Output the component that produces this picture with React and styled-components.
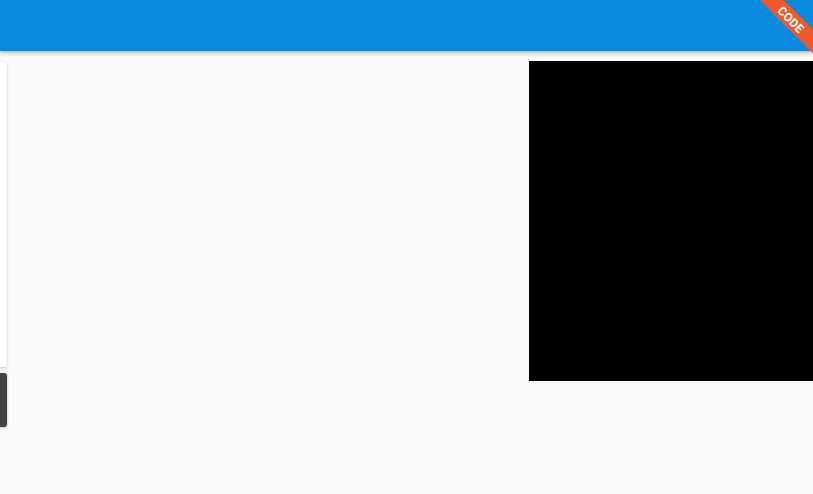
import React from "react";
import styled, { createGlobalStyle } from "styled-components";

const GlobalStyle = createGlobalStyle`
  * { margin: 0; padding: 0; box-sizing: border-box; }
  html, body { width: 100%; height: 100%; overflow: hidden; }
  body { background-color: #fafafa; font-family: Roboto, "Liberation Sans", sans-serif; }
`;

const Page = styled.div`
  position: relative;
  min-height: 100vh;
  overflow: hidden;
`;

const Header = styled.header`
  height: 51px;
  background-color: #0a89de;
  box-shadow: 0 2px 4px rgba(0, 0, 0, 0.28);
  position: relative;
  z-index: 1;
`;

// diagonal "CODE" corner ribbon
const Ribbon = styled.div`
  position: absolute;
  top: 11px;
  right: -28px;
  width: 100px;
  height: 17px;
  background-color: #ee5a2b;
  color: #fff;
  font-size: 12px;
  font-weight: 700;
  letter-spacing: 0.2px;
  display: flex;
  align-items: center;
  justify-content: center;
  transform: rotate(45deg);
  z-index: 2;
`;

const Body = styled.main`
  display: flex;
  justify-content: space-between;
  align-items: flex-start;
`;

const Side = styled.aside`
  width: 7px;
  display: flex;
  flex-direction: column;
  gap: 6px;
  margin-top: 11px;
`;

const Card = styled.div`
  height: 305px;
  background-color: #fff;
  border-radius: 0 3px 3px 0;
  box-shadow: 0 1px 3px rgba(0, 0, 0, 0.22);
`;

const DarkButton = styled.div`
  height: 54px;
  background-color: #424242;
  border-radius: 0 3px 3px 0;
  box-shadow: 0 1px 3px rgba(0, 0, 0, 0.25);
`;

const Preview = styled.section`
  width: 284px;
  height: 320px;
  margin-top: 10px;
  background-color: #000;
`;

export default function App() {
  return (
    <>
      <GlobalStyle />
      <Page>
        <Header />
        <Ribbon>CODE</Ribbon>
        <Body>
          <Side>
            <Card />
            <DarkButton />
          </Side>
          <Preview />
        </Body>
      </Page>
    </>
  );
}
